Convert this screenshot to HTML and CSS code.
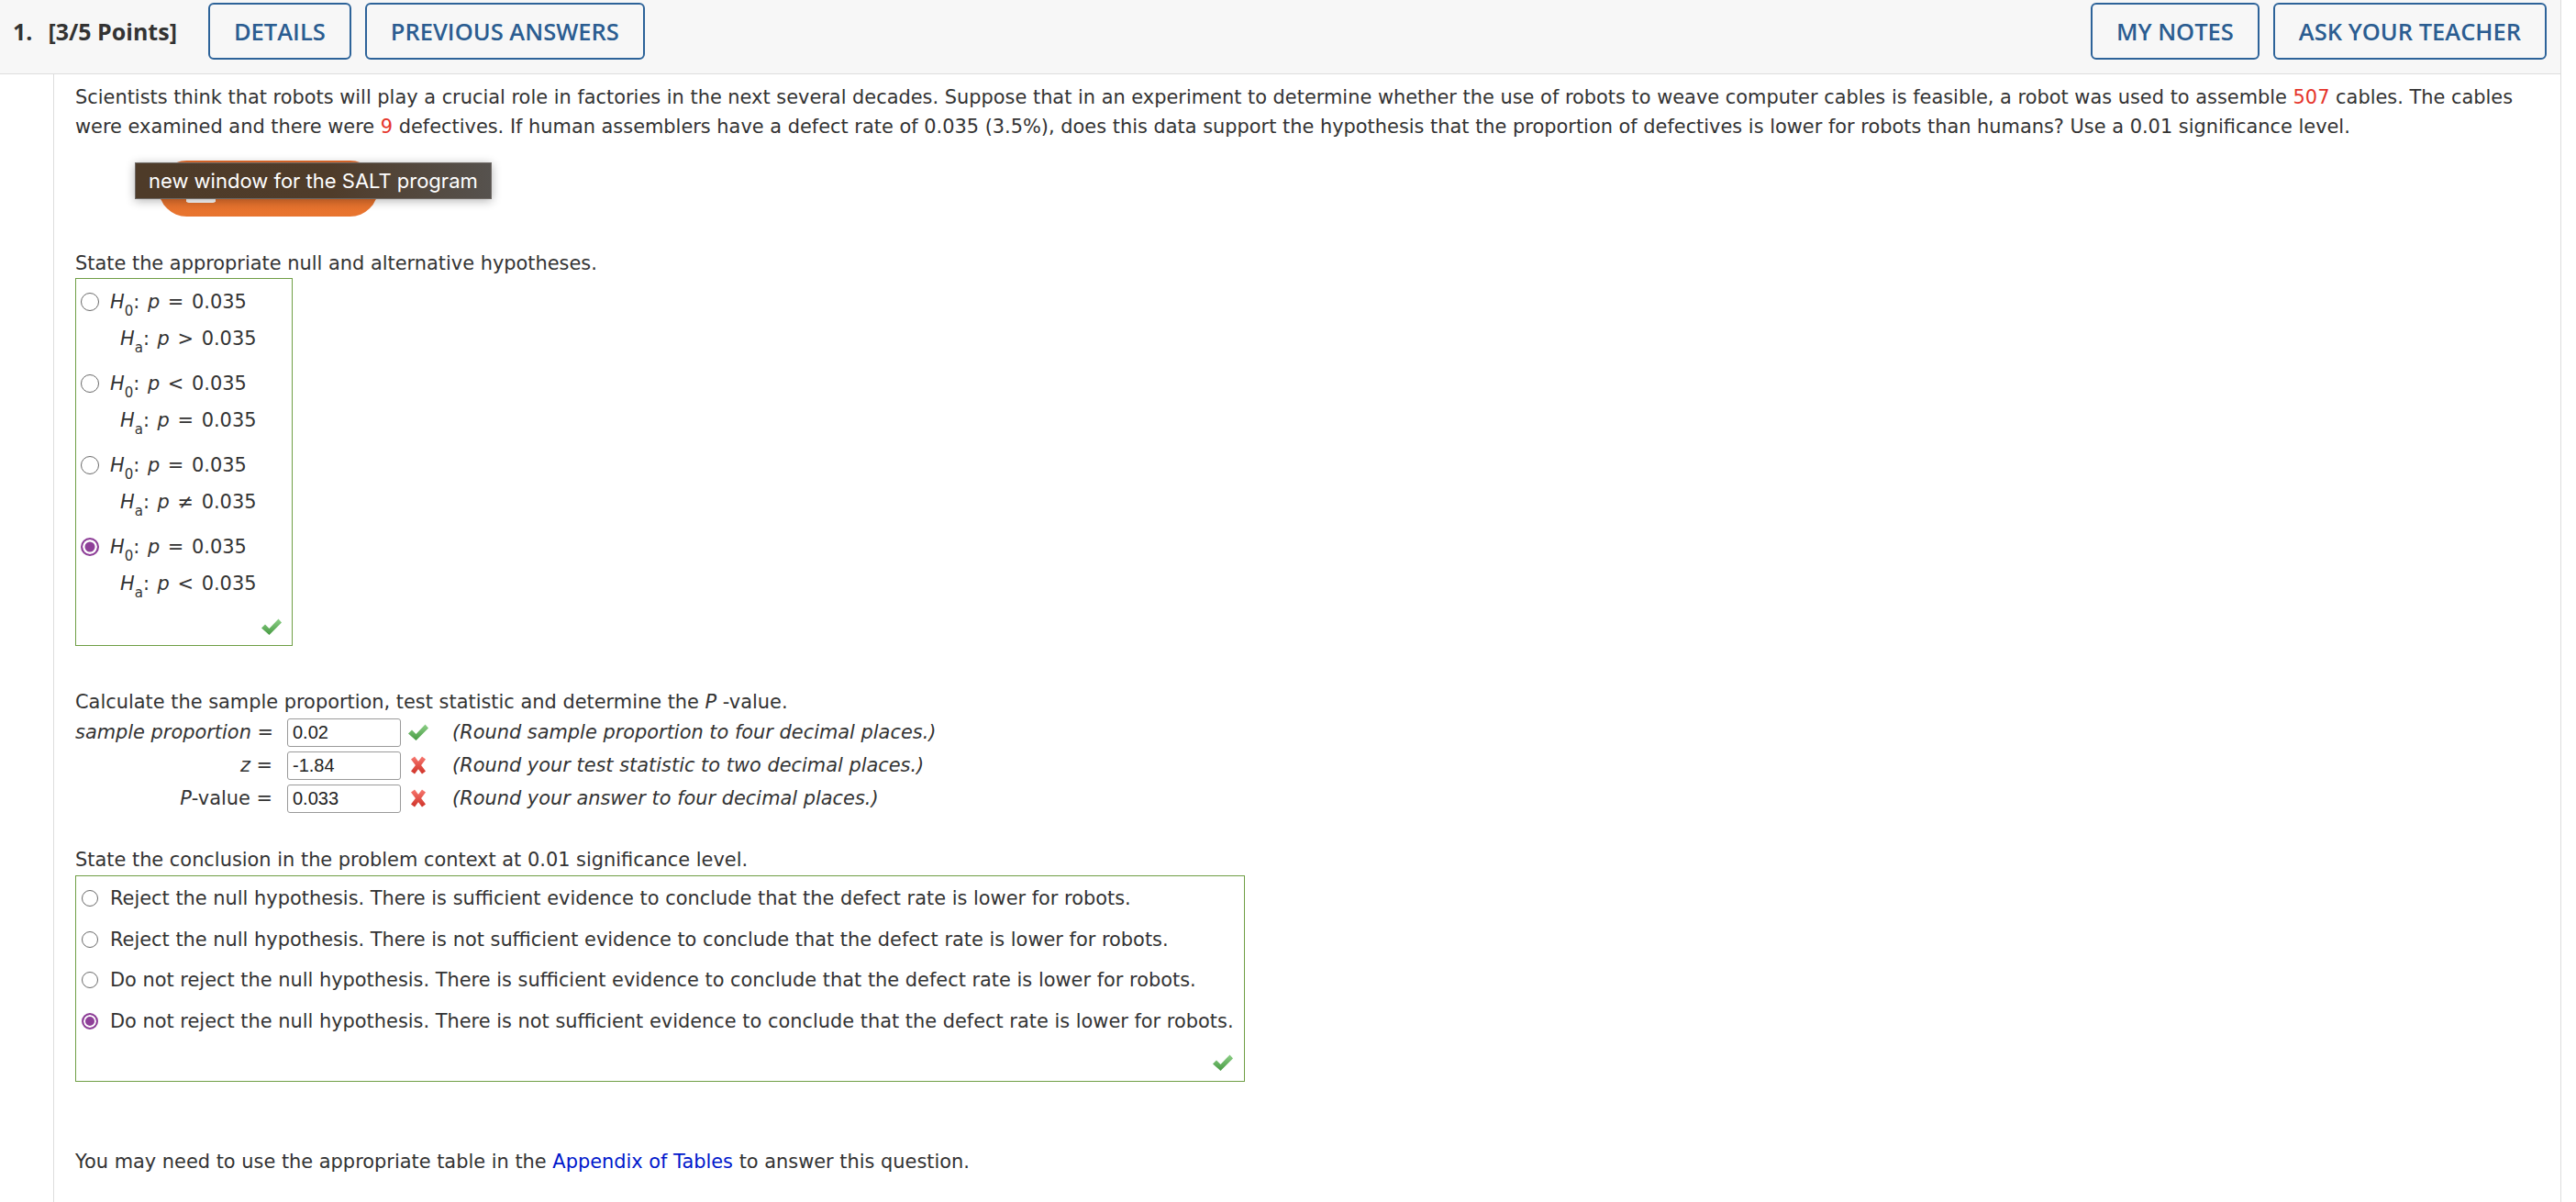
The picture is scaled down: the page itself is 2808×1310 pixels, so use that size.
FILE: index.html
```html
<!DOCTYPE html>
<html lang="en">
<head>
  <meta charset="UTF-8" />
  <title>Question 1</title>
  <link rel="stylesheet" href="styles.css">
</head>
<body>

  <!-- shared gradients for the mark icons -->
  <svg class="defs" width="0" height="0">
    <defs>
      <linearGradient id="okGrad" x1="0" y1="0" x2="0" y2="1">
        <stop offset="0" stop-color="#8ed088"/>
        <stop offset="1" stop-color="#469a42"/>
      </linearGradient>
      <linearGradient id="badGrad" x1="0" y1="0" x2="0" y2="1">
        <stop offset="0" stop-color="#f4726a"/>
        <stop offset="1" stop-color="#d2372d"/>
      </linearGradient>
    </defs>
  </svg>

  <div class="question">
    <div class="q-header">
      <div class="q-title">1.<span class="pts">[3/5 Points]</span></div>
      <a class="hbtn first">DETAILS</a>
      <a class="hbtn">PREVIOUS ANSWERS</a>
      <div class="spacer"></div>
      <a class="hbtn">MY NOTES</a>
      <a class="hbtn">ASK YOUR TEACHER</a>
    </div>

    <div class="q-body">
      <p class="prompt">Scientists think that robots will play a crucial role in factories in the next several decades. Suppose that in an experiment to determine whether the use of robots to weave computer cables is feasible, a robot was used to assemble <span class="num">507</span> cables. The cables were examined and there were <span class="num">9</span> defectives. If human assemblers have a defect rate of 0.035 (3.5%), does this data support the hypothesis that the proportion of defectives is lower for robots than humans? Use a 0.01 significance level.</p>

      <div class="salt-row">
        <span class="salt-btn">
          <svg class="salt-icon" width="32" height="22" viewBox="0 0 32 22"><rect x="1" y="1" width="30" height="20" rx="2" fill="none" stroke="#fff" stroke-width="2"/><rect x="0" y="18" width="32" height="3" fill="#fff"/></svg>
          Use SALT
        </span>
        <span class="tip">new window for the SALT program</span>
      </div>

      <p class="step">State the appropriate null and alternative hypotheses.</p>
      <div class="answer-box hyp-box">
        <div class="hopt">
          <span class="radio"></span>
          <span class="hlines">
            <span class="hl"><i>H</i><sub>0</sub>: <i>p</i> = 0.035</span>
            <span class="hl ha"><i>H</i><sub>a</sub>: <i>p</i> &gt; 0.035</span>
          </span>
        </div>
        <div class="hopt">
          <span class="radio"></span>
          <span class="hlines">
            <span class="hl"><i>H</i><sub>0</sub>: <i>p</i> &lt; 0.035</span>
            <span class="hl ha"><i>H</i><sub>a</sub>: <i>p</i> = 0.035</span>
          </span>
        </div>
        <div class="hopt">
          <span class="radio"></span>
          <span class="hlines">
            <span class="hl"><i>H</i><sub>0</sub>: <i>p</i> = 0.035</span>
            <span class="hl ha"><i>H</i><sub>a</sub>: <i>p</i> &ne; 0.035</span>
          </span>
        </div>
        <div class="hopt">
          <span class="radio on"></span>
          <span class="hlines">
            <span class="hl"><i>H</i><sub>0</sub>: <i>p</i> = 0.035</span>
            <span class="hl ha"><i>H</i><sub>a</sub>: <i>p</i> &lt; 0.035</span>
          </span>
        </div>
        <div class="mark-row">
          <svg class="ok" width="24" height="20" viewBox="0 0 24 20"><path d="M1 11.5 L5 7.5 L9.5 12 L19.5 1.5 L23 5.5 L9.5 19 Z" fill="url(#okGrad)"/></svg>
        </div>
      </div>

      <p class="step calc-head">Calculate the sample proportion, test statistic and determine the <i>P</i> -value.</p>
      <div class="calc">
        <div class="calc-row">
          <span class="lbl"><i>sample proportion</i> =</span>
          <span class="field">0.02</span>
          <svg class="ok" width="24" height="20" viewBox="0 0 24 20"><path d="M1 11.5 L5 7.5 L9.5 12 L19.5 1.5 L23 5.5 L9.5 19 Z" fill="url(#okGrad)"/></svg>
          <span class="hint">(Round sample proportion to four decimal places.)</span>
        </div>
        <div class="calc-row">
          <span class="lbl"><i>z</i> =</span>
          <span class="field">-1.84</span>
          <svg class="bad" width="24" height="20" viewBox="0 0 24 20"><path d="M6 2 L18 18 M18 2 L6 18" stroke="url(#badGrad)" stroke-width="5" fill="none"/></svg>
          <span class="hint">(Round your test statistic to two decimal places.)</span>
        </div>
        <div class="calc-row">
          <span class="lbl"><i>P</i>-value =</span>
          <span class="field">0.033</span>
          <svg class="bad" width="24" height="20" viewBox="0 0 24 20"><path d="M6 2 L18 18 M18 2 L6 18" stroke="url(#badGrad)" stroke-width="5" fill="none"/></svg>
          <span class="hint">(Round your answer to four decimal places.)</span>
        </div>
      </div>

      <p class="step concl-head">State the conclusion in the problem context at 0.01 significance level.</p>
      <div class="answer-box concl-box">
        <div class="copt"><span class="radio sm"></span>Reject the null hypothesis. There is sufficient evidence to conclude that the defect rate is lower for robots.</div>
        <div class="copt"><span class="radio sm"></span>Reject the null hypothesis. There is not sufficient evidence to conclude that the defect rate is lower for robots.</div>
        <div class="copt"><span class="radio sm"></span>Do not reject the null hypothesis. There is sufficient evidence to conclude that the defect rate is lower for robots.</div>
        <div class="copt"><span class="radio sm on"></span>Do not reject the null hypothesis. There is not sufficient evidence to conclude that the defect rate is lower for robots.</div>
        <div class="mark-row concl-mark">
          <svg class="ok" width="24" height="20" viewBox="0 0 24 20"><path d="M1 11.5 L5 7.5 L9.5 12 L19.5 1.5 L23 5.5 L9.5 19 Z" fill="url(#okGrad)"/></svg>
        </div>
      </div>

      <p class="step footnote">You may need to use the appropriate table in the <a class="link">Appendix of Tables</a> to answer this question.</p>
    </div>
  </div>

</body>
</html>
```

FILE: styles.css
```css
html, body {
  margin: 0;
  padding: 0;
  background-color: #fff;
  color: #333;
  font-family: 'DejaVu Sans', Verdana, sans-serif;
  font-size: 20.9px;
}

.defs {
  position: absolute;
}

.question {
  width: 2791px;
  border-right: 1px solid #ddd;
  min-height: 1310px;
}

/* header bar */
.q-header {
  display: flex;
  align-items: center;
  height: 62px;
  padding: 3px 15px 15px 14px;
  background-color: #f7f7f7;
  border-bottom: 1px solid #ddd;
}

.q-title {
  font-family: 'Open Sans', sans-serif;
  font-weight: 700;
  font-size: 25px;
  color: #333;
}

.q-title .pts {
  margin-left: 17px;
}

.hbtn {
  display: flex;
  align-items: center;
  height: 62px;
  box-sizing: border-box;
  padding: 0 26px;
  margin-left: 15px;
  border: 2px solid #2d6399;
  border-radius: 6px;
  font-family: 'Open Sans', sans-serif;
  font-weight: 600;
  font-size: 25.5px;
  color: #2b5d91;
  background-color: #f7f7f7;
}

.hbtn.first {
  margin-left: 34px;
}

.spacer {
  flex: 1;
}

/* body */
.q-body {
  margin-left: 58px;
  border-left: 1px solid #ddd;
  padding: 9px 24px 30px 23px;
}

.prompt {
  margin: 0;
  line-height: 32px;
}

.num {
  color: #e5352b;
}

.salt-row {
  position: relative;
  margin: 21px 0 0 91px;
  height: 61px;
}

.salt-btn {
  display: inline-flex;
  align-items: center;
  gap: 12px;
  height: 61px;
  width: 239px;
  box-sizing: border-box;
  padding-left: 30px;
  border-radius: 31px;
  background: linear-gradient(#e46a2a, #e8752f);
  color: #fff;
  font-weight: bold;
  font-size: 20px;
}

.salt-icon {
  margin-top: 8px;
}

.tip {
  position: absolute;
  left: -26px;
  top: 2px;
  height: 40px;
  box-sizing: border-box;
  padding: 0 14px;
  line-height: 38px;
  border: 1px solid #6f6a66;
  background: linear-gradient(to right, #4e3b29 0%, #4f3c2a 55%, #56524e 100%);
  color: #fff;
  font-family: Inter, 'Liberation Sans', sans-serif;
  font-size: 22px;
  white-space: nowrap;
  box-shadow: 0 2px 10px rgba(0, 0, 0, 0.3);
}

.step {
  margin: 35px 0 0;
  line-height: 32px;
}

/* answer boxes */
.answer-box {
  border: 1px solid #6f9e45;
  box-sizing: border-box;
}

.hyp-box {
  width: 237px;
  padding: 5px 10px 10px 5px;
}

.hopt {
  display: flex;
  align-items: flex-start;
  height: 80px;
  margin-bottom: 9px;
}

.hopt:last-of-type {
  margin-bottom: 0;
}

.radio {
  flex: none;
  width: 20px;
  height: 20px;
  box-sizing: border-box;
  border: 1.5px solid #6a6a6a;
  border-radius: 50%;
  background-color: #fff;
}

.hopt .radio {
  margin: 10px 12px 0 0;
}

.radio.on {
  border: 2px solid #8e3f98;
  background-color: #8e3f98;
  box-shadow: inset 0 0 0 2.5px #fff;
}

.hlines {
  display: flex;
  flex-direction: column;
}

.hl {
  line-height: 40px;
  white-space: nowrap;
  word-spacing: 2px;
}

.hl.ha {
  padding-left: 11px;
}

.hl sub {
  font-size: 15px;
  line-height: 0;
  vertical-align: -8px;
}

.mark-row {
  display: flex;
  justify-content: flex-end;
  margin-top: 17px;
}

/* calculation rows */
.calc-head {
  margin-top: 46px;
  line-height: 30px;
}

.calc-row {
  display: flex;
  align-items: center;
  height: 36px;
}

.lbl {
  width: 215px;
  text-align: right;
  white-space: nowrap;
}

.field {
  width: 124px;
  height: 31px;
  box-sizing: border-box;
  margin: 0 7px 0 16px;
  padding-left: 5px;
  border: 1px solid #9a9a9a;
  border-radius: 3px;
  font-family: 'Liberation Sans', Arial, sans-serif;
  font-size: 20px;
  line-height: 29px;
  color: #222;
}

.hint {
  margin-left: 25px;
  font-style: italic;
  white-space: nowrap;
}

/* conclusion */
.concl-head {
  margin-top: 32px;
  line-height: 34px;
}

.concl-box {
  width: fit-content;
  padding: 2px 11px 10px 6px;
}

.copt {
  display: flex;
  align-items: center;
  height: 44.5px;
  white-space: nowrap;
}

.radio.sm {
  width: 18px;
  height: 18px;
  margin-right: 13px;
}

.radio.sm.on {
  box-shadow: inset 0 0 0 2px #fff;
}

.concl-mark {
  margin-top: 13px;
}

.footnote {
  margin-top: 71px;
}

.link {
  color: #0018cc;
}
```
